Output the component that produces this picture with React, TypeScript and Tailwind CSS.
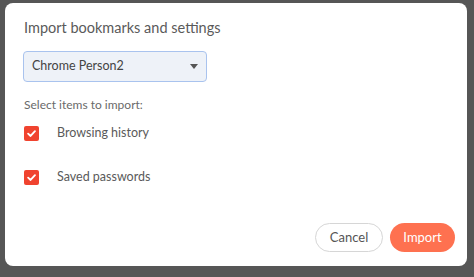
import React from "react";

function Check() {
  return (
    <span className="flex h-[15px] w-[15px] items-center justify-center rounded-[2px] bg-[#f0432f]">
      <svg width="11" height="11" viewBox="0 0 12 12" fill="none">
        <path d="M2.3 6.2 L5 8.7 L9.8 3.4" stroke="white" strokeWidth="2" strokeLinecap="round" strokeLinejoin="round" />
      </svg>
    </span>
  );
}

export default function App() {
  return (
    <div className="h-[277px] w-[474px] bg-[#565656] pl-[5px] pt-[3px]" style={{ fontFamily: "Lato, 'Open Sans', sans-serif" }}>
      <div className="flex h-[263px] w-[462px] flex-col rounded-[8px] bg-white pl-[19px] pr-[12px]">
        <div className="pt-[15px] text-[14.5px] leading-[20px] text-[#5a5a5a]">Import bookmarks and settings</div>
        <div className="mt-[13px] flex h-[31px] w-[184px] -ml-[1px] items-center justify-between rounded-[4px] border border-[#a9c3ee] bg-[#eef2f8] pl-[8px] pr-[8px]">
          <span className="text-[12.5px] text-[#444]">Chrome Person2</span>
          <svg width="8" height="5" viewBox="0 0 8 5"><path d="M0 0 L8 0 L4 5 Z" fill="#555" /></svg>
        </div>
        <div className="mt-[15px] text-[12px] leading-[16px] text-[#6a6a6a]">Select items to import:</div>
        <div className="mt-[11px] flex items-center">
          <Check />
          <span className="ml-[18px] text-[12.5px] text-[#5a5a5a]">Browsing history</span>
        </div>
        <div className="mt-[25px] flex items-center">
          <Check />
          <span className="ml-[18px] text-[12.5px] text-[#5a5a5a]">Saved passwords</span>
        </div>
        <div className="mt-auto mb-[14px] flex justify-end gap-[7px]">
          <button className="h-[29px] w-[68px] rounded-full border border-[#d6d6d6] bg-white text-[13px] text-[#555]">Cancel</button>
          <button className="h-[29px] w-[65px] rounded-full bg-[#fe7150] text-[13px] text-white">Import</button>
        </div>
      </div>
    </div>
  );
}
